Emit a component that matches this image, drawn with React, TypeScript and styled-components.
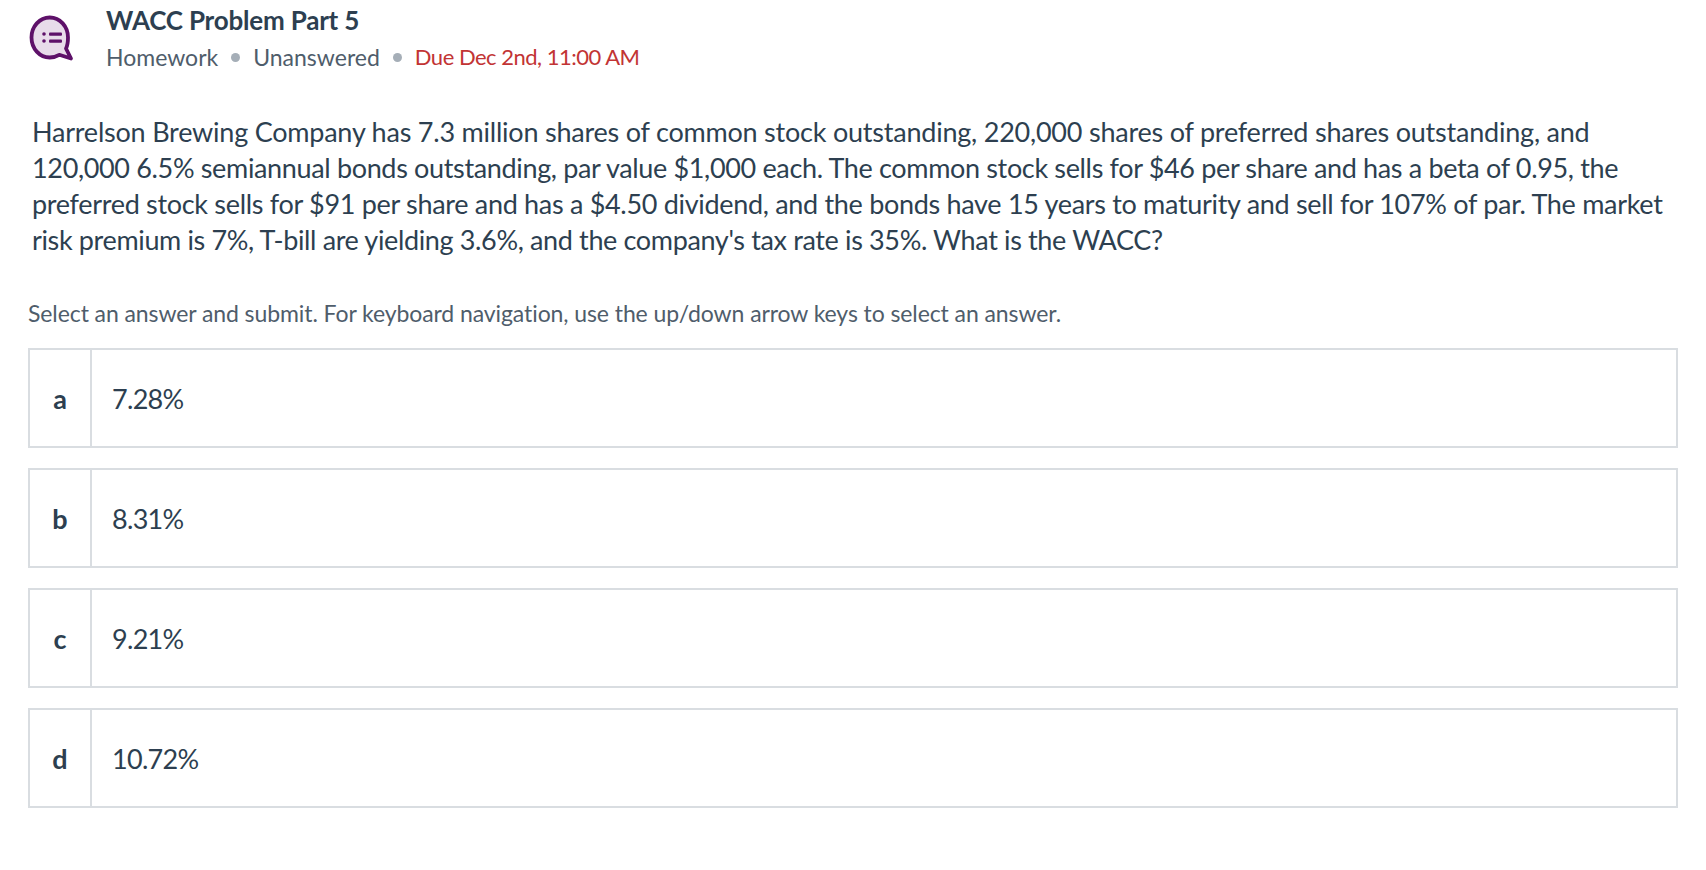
import React from 'react';
import styled, { createGlobalStyle } from 'styled-components';

const COLORS = {
  TEXT: '#2d3f50',
  MUTED: '#4f5d6b',
  DUE: '#c23434',
  DOT: '#a5aeb7',
  BORDER: '#d9dde1',
  PURPLE: '#5e1169',
  PURPLE_LIGHT: '#e8dcea'
};

const GlobalStyle = createGlobalStyle`
  html, body {
    margin: 0;
    padding: 0;
    background: #fff;
    font-family: Lato, "Noto Sans", sans-serif;
    color: ${COLORS.TEXT};
  }
`;

const Page = styled.main`
  padding: 4px 28px 0 28px;
`;

const Header = styled.header`
  display: flex;
  align-items: flex-start;
`;

const IconWrap = styled.div`
  width: 78px;
  padding-top: 11px;
  flex-shrink: 0;
`;

const HeaderText = styled.div`
  display: flex;
  flex-direction: column;
`;

const Title = styled.h1`
  margin: 0;
  font-size: 26px;
  line-height: 32px;
  font-weight: 700;
  letter-spacing: -0.2px;
  color: ${COLORS.TEXT};
`;

const Meta = styled.div`
  display: flex;
  align-items: center;
  margin-top: 5px;
  font-size: 23px;
  line-height: 32px;
  color: ${COLORS.MUTED};
`;

const Dot = styled.span`
  width: 9px;
  height: 9px;
  border-radius: 50%;
  background: ${COLORS.DOT};
  margin: 0 13px;
`;

const Due = styled.span`
  color: ${COLORS.DUE};
  font-size: 22px;
  letter-spacing: -0.5px;
`;

const Question = styled.div`
  margin: 41px 0 0 4px;
  font-size: 27px;
  line-height: 36px;
  color: ${COLORS.TEXT};
  white-space: nowrap;
`;

const QuestionLine = styled.div<{ $tracking: number }>`
  letter-spacing: ${props => props.$tracking}px;
`;

const Hint = styled.p`
  margin: 39px 0 0;
  font-size: 23px;
  line-height: 32px;
  letter-spacing: -0.09px;
  color: ${COLORS.MUTED};
`;

const Answers = styled.ul`
  list-style: none;
  margin: 19px 0 0;
  padding: 0;
  width: 1650px;
  display: flex;
  flex-direction: column;
  gap: 20px;
`;

const Answer = styled.li`
  display: flex;
  height: 100px;
  box-sizing: border-box;
  border: 2px solid ${COLORS.BORDER};
`;

const Letter = styled.div`
  width: 60px;
  flex-shrink: 0;
  display: flex;
  align-items: center;
  justify-content: center;
  border-right: 2px solid ${COLORS.BORDER};
  font-size: 27px;
  font-weight: 700;
`;

const Value = styled.div`
  display: flex;
  align-items: center;
  padding-left: 20px;
  font-size: 27px;
  letter-spacing: -0.7px;
`;

const BubbleIcon = () => (
  <svg width="46" height="48" viewBox="0 0 46 48" aria-hidden="true">
    <path
      d="M21.75 2.5C11.5 2.5 3.5 11.5 3.5 22.5S11.5 42.5 21.75 42.5c3.6 0 6.500-.9 9.500-2.700L43 43.500 38 33.500C39.500 30.500 40 26.500 40 22.500 40 11.500 32 2.500 21.750 2.500Z"
      fill={COLORS.PURPLE_LIGHT}
      stroke={COLORS.PURPLE}
      strokeWidth="3.8"
      strokeLinejoin="round"
    />
    <circle cx="16" cy="19" r="1.800" fill={COLORS.PURPLE} />
    <circle cx="16" cy="26" r="1.800" fill={COLORS.PURPLE} />
    <rect x="21" y="17.500" width="13" height="3.200" rx="1" fill={COLORS.PURPLE} />
    <rect x="21" y="24.500" width="13" height="3.200" rx="1" fill={COLORS.PURPLE} />
  </svg>
);

const questionLines = [
  {
    text: 'Harrelson Brewing Company has 7.3 million shares of common stock outstanding, 220,000 shares of preferred shares outstanding, and',
    tracking: -0.22
  },
  {
    text: '120,000 6.5% semiannual bonds outstanding, par value $1,000 each. The common stock sells for $46 per share and has a beta of 0.95, the',
    tracking: -0.345
  },
  {
    text: 'preferred stock sells for $91 per share and has a $4.50 dividend, and the bonds have 15 years to maturity and sell for 107% of par. The market',
    tracking: -0.31
  },
  {
    text: "risk premium is 7%, T-bill are yielding 3.6%, and the company's tax rate is 35%. What is the WACC?",
    tracking: -0.36
  }
];

const answers = [
  { letter: 'a', value: '7.28%' },
  { letter: 'b', value: '8.31%' },
  { letter: 'c', value: '9.21%' },
  { letter: 'd', value: '10.72%' }
];

const App: React.FC = () => (
  <Page>
    <GlobalStyle />
    <Header>
      <IconWrap>
        <BubbleIcon />
      </IconWrap>
      <HeaderText>
        <Title>WACC Problem Part 5</Title>
        <Meta>
          Homework
          <Dot />
          Unanswered
          <Dot />
          <Due>Due Dec 2nd, 11:00 AM</Due>
        </Meta>
      </HeaderText>
    </Header>
    <Question>
      {questionLines.map(line => (
        <QuestionLine key={line.text} $tracking={line.tracking}>
          {line.text}
        </QuestionLine>
      ))}
    </Question>
    <Hint>Select an answer and submit. For keyboard navigation, use the up/down arrow keys to select an answer.</Hint>
    <Answers>
      {answers.map(answer => (
        <Answer key={answer.letter}>
          <Letter>{answer.letter}</Letter>
          <Value>{answer.value}</Value>
        </Answer>
      ))}
    </Answers>
  </Page>
);

export default App;
